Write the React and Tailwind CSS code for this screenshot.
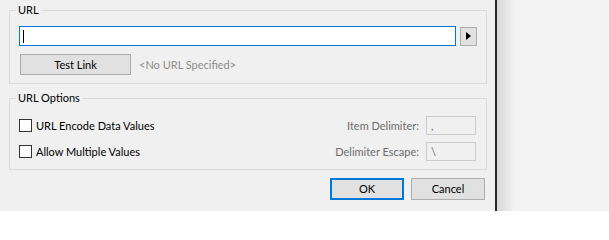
import React from 'react'

const font = { fontFamily: 'Lato, "Liberation Sans", sans-serif' }

function Checkbox({ label }) {
  return (
    <label className="ml-[9px] flex items-center">
      <span className="h-[13px] w-[13px] border border-[#333333] bg-white" />
      <span className="ml-[4px] text-black">{label}</span>
    </label>
  )
}

function DisabledField({ label, value }) {
  return (
    <div className="ml-auto mr-[10px] flex items-center">
      <span className="text-[#6d6d6d]">{label}</span>
      <div className="ml-[7px] flex h-[19px] w-[50px] items-center border border-[#cccccc] bg-[#f0f0f0] pl-[4px] text-[#6d6d6d]">
        {value}
      </div>
    </div>
  )
}

export default function App() {
  return (
    <div
      className="flex h-[211px] w-[609px] overflow-hidden bg-[#f3f3f3] text-[11px] leading-[16px]"
      style={font}
    >
      {/* dialog */}
      <div className="w-[497px] flex-shrink-0 border-r-2 border-[#262626] bg-[#f0f0f0] pt-[2px]">
        <fieldset className="ml-[9px] w-[478px] border border-[#dcdcdc] pb-[8px]">
          <legend className="ml-[6px] px-[2px] text-black">URL</legend>
          <div className="mt-[8px] flex items-center">
            <div className="ml-[9px] flex h-[20px] w-[437px] items-center border border-[#0078d7] bg-white pl-[3px]">
              <span className="h-[13px] w-px bg-black" />
            </div>
            <button className="ml-[4px] flex h-[19px] w-[17px] items-center justify-center border border-[#adadad] bg-[#e1e1e1]">
              <svg width="5" height="8" viewBox="0 0 5 8">
                <path d="M0 0 L5 4 L0 8 Z" fill="#000" />
              </svg>
            </button>
          </div>
          <div className="mt-[8px] flex items-center">
            <button className="ml-[10px] h-[21px] w-[111px] border border-[#adadad] bg-[#e1e1e1] text-black">
              Test Link
            </button>
            <span className="ml-[8px] text-[#8c8c8c]">&lt;No URL Specified&gt;</span>
          </div>
        </fieldset>

        <fieldset className="ml-[9px] mt-[6px] w-[478px] border border-[#dcdcdc] pb-[8px]">
          <legend className="ml-[6px] px-[2px] text-black">URL Options</legend>
          <div className="mt-[10px] flex h-[19px] items-center">
            <Checkbox label="URL Encode Data Values" />
            <DisabledField label="Item Delimiter:" value="," />
          </div>
          <div className="mt-[7px] flex h-[19px] items-center">
            <Checkbox label="Allow Multiple Values" />
            <DisabledField label="Delimiter Escape:" value="\" />
          </div>
        </fieldset>

        <div className="mt-[8px] flex justify-end gap-[7px] pr-[10px]">
          <button className="h-[22px] w-[74px] border-2 border-[#0078d7] bg-[#e1e1e1] text-black">OK</button>
          <button className="h-[22px] w-[74px] border border-[#adadad] bg-[#e1e1e1] text-black">Cancel</button>
        </div>
      </div>

      {/* shadow beside the dialog */}
      <div className="w-[18px] flex-shrink-0 bg-gradient-to-r from-[#d6d6d6] to-[#f3f3f3]" />
      <div className="flex-1" />
    </div>
  )
}
